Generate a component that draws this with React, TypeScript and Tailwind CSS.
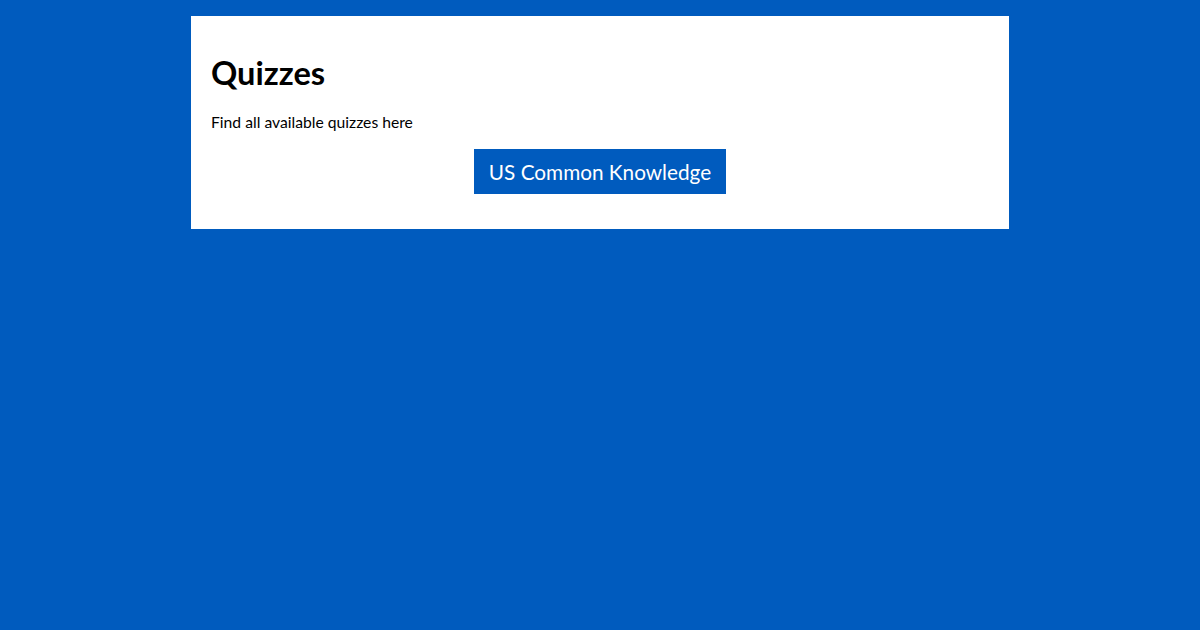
export default function App() {
  return (
    <div className="min-h-screen w-full bg-[#005bbe] pt-4 font-['Lato',sans-serif]">
      <div className="mx-auto w-[818px] bg-white px-5 pt-5 pb-[35px]">
        <h1 className="mt-[18px] text-[32.6px] font-bold leading-[38px] text-black">Quizzes</h1>
        <p className="mt-[21px] text-[15.7px] leading-[19px] text-black">Find all available quizzes here</p>
        <div className="mt-[17px] flex justify-center">
          <button className="h-[45px] w-[252px] bg-[#005bbe] pt-[2px] text-[20.75px] text-white">
            US Common Knowledge
          </button>
        </div>
      </div>
    </div>
  );
}
